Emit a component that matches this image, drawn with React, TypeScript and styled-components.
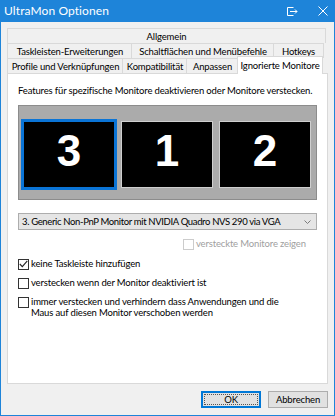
import styled, { createGlobalStyle } from 'styled-components';

const UI_FONT = `'Lato', 'Noto Sans', 'Liberation Sans', sans-serif`;
const ACCENT = '#1e84d9';

const GlobalStyle = createGlobalStyle`
  * { box-sizing: border-box; }
  html, body { margin: 0; padding: 0; background: #ffffff; }
  body { font-family: ${UI_FONT}; font-size: 9.5px; letter-spacing: -0.15px; color: #000; }
`;

const Window = styled.div`
  width: 335px;
  height: 416px;
  display: flex;
  flex-direction: column;
  background: #f0f0f0;
  border: 1px solid ${ACCENT};
  border-top: 0;
`;

const TitleBar = styled.div`
  height: 22px;
  flex: none;
  display: flex;
  align-items: center;
  justify-content: space-between;
  background: ${ACCENT};
  color: #fff;
  padding: 0 6px 0 3px;
`;

const Title = styled.span`
  font-size: 12px;
  letter-spacing: 0.1px;
  line-height: 14px;
`;

const Caption = styled.div`
  display: flex;
  align-items: center;
  gap: 20px;
`;

const Body = styled.div`
  flex: 1;
  display: flex;
  flex-direction: column;
  padding: 6px 6px 7px;
`;

const TabStrip = styled.div`
  display: flex;
  flex-direction: column;
  margin-right: 2px;
`;

const TabRow = styled.div`
  display: flex;
  height: 15px;
`;

const Tab = styled.div<{ $w: number; $active?: boolean }>`
  width: ${p => p.$w}px;
  flex: none;
  display: flex;
  align-items: center;
  justify-content: center;
  padding-top: 1px;
  line-height: 12px;
  white-space: nowrap;
  border: 1px solid #d9d9d9;
  border-bottom: 0;
  background: #f0f0f0;
  & + & {
    margin-left: -1px;
  }
  ${p =>
    p.$active &&
    `
    position: relative;
    z-index: 1;
    height: 18px;
    padding-top: 0;
    margin: -2px -2px -1px -2px;
    background: #ffffff;
    & + & { margin-left: -2px; }
    `}
`;

const Panel = styled.div`
  flex: 1;
  background: #ffffff;
  border: 1px solid #d9d9d9;
  padding: 10px 10px 0;
  display: flex;
  flex-direction: column;
`;

const Intro = styled.p`
  margin: 0;
  line-height: 13px;
  white-space: nowrap;
`;

const Arrangement = styled.div`
  margin-top: 8px;
  height: 95px;
  background: #ababab;
  border: 1px solid #8c8c8c;
  display: flex;
  align-items: flex-start;
  gap: 6px;
  padding: 15px 0 0 4px;
`;

const Monitor = styled.div<{ $selected?: boolean }>`
  width: 92px;
  height: 67px;
  background: #000;
  border: 1px solid ${p => (p.$selected ? '#0a74d6' : '#cfcfcf')};
  outline: ${p => (p.$selected ? '2px solid #0a74d6' : 'none')};
  display: flex;
  align-items: center;
  justify-content: center;
  padding-bottom: 8px;
  color: #fff;
  font-family: 'Liberation Sans', Arial, sans-serif;
  font-weight: bold;
  font-size: 44px;
  letter-spacing: 0;
  line-height: 1;
`;

const Select = styled.div`
  margin-top: 13px;
  height: 17px;
  background: #e5e5e5;
  border: 1px solid #adadad;
  display: flex;
  align-items: center;
  justify-content: space-between;
  padding: 0 5px 0 3px;
  line-height: 12px;
  letter-spacing: -0.35px;
  white-space: nowrap;
`;

const CheckRow = styled.label<{ $disabled?: boolean; $indent?: number; $gap?: number }>`
  display: flex;
  align-items: flex-start;
  gap: 2px;
  margin-top: ${p => p.$gap ?? 7}px;
  padding-left: ${p => p.$indent ?? 0}px;
  line-height: 12px;
  color: ${p => (p.$disabled ? '#a0a0a0' : '#000')};
`;

const Box = styled.span<{ $disabled?: boolean }>`
  width: 11px;
  height: 11px;
  flex: none;
  margin-top: 0.5px;
  border: 1px solid ${p => (p.$disabled ? '#cccccc' : '#333333')};
  background: #fff;
  display: flex;
  align-items: center;
  justify-content: center;
`;

const LongLabel = styled.span`
  line-height: 11px;
`;

const Footer = styled.div`
  margin-top: 7px;
  display: flex;
  justify-content: flex-end;
  gap: 7px;
`;

const Button = styled.button<{ $default?: boolean }>`
  width: 60px;
  height: 17px;
  padding: 0;
  font-family: ${UI_FONT};
  font-size: 9.5px;
  letter-spacing: -0.15px;
  color: #000;
  background: #e1e1e1;
  border: 1px solid ${p => (p.$default ? '#0078d7' : '#adadad')};
  box-shadow: ${p => (p.$default ? 'inset 0 0 0 1px #0078d7' : 'none')};
  display: flex;
  align-items: center;
  justify-content: center;
  position: relative;
`;

const FocusRing = styled.span`
  position: absolute;
  inset: 2px;
  border: 1px dotted #555;
`;

const MoveIcon = () => (
  <svg width="11" height="9" viewBox="0 0 11 9" fill="none" stroke="#fff" strokeWidth="1">
    <path d="M6.5 0.5H0.5V8.5H6.5" />
    <path d="M3 4.5H10M8 2.5L10 4.5L8 6.5" />
  </svg>
);

const CloseIcon = () => (
  <svg width="10" height="10" viewBox="0 0 10 10" stroke="#fff" strokeWidth="1">
    <path d="M0.5 0.5L9.5 9.5M9.5 0.5L0.5 9.5" />
  </svg>
);

const Chevron = () => (
  <svg width="7" height="4" viewBox="0 0 7 4" fill="none" stroke="#7a7a7a" strokeWidth="1">
    <path d="M0.5 0.5L3.5 3.5L6.5 0.5" />
  </svg>
);

const Check = () => (
  <svg width="9" height="8" viewBox="0 0 9 8" fill="none" stroke="#222" strokeWidth="1.1">
    <path d="M0.8 4L3.3 6.6L8.3 0.8" />
  </svg>
);

const tabRows = [
  [{ label: 'Allgemein', w: 319 }],
  [
    { label: 'Taskleisten-Erweiterungen', w: 126 },
    { label: 'Schaltflächen und Menübefehle', w: 144 },
    { label: 'Hotkeys', w: 51 },
  ],
  [
    { label: 'Profile und Verknüpfungen', w: 117 },
    { label: 'Kompatibilität', w: 66 },
    { label: 'Anpassen', w: 53 },
    { label: 'Ignorierte Monitore', w: 86, active: true },
  ],
];

const App = () => {
  return (
    <>
      <GlobalStyle />
      <Window>
        <TitleBar>
          <Title>UltraMon Optionen</Title>
          <Caption>
            <MoveIcon />
            <CloseIcon />
          </Caption>
        </TitleBar>
        <Body>
          <TabStrip>
            {tabRows.map((row, i) => (
              <TabRow key={i}>
                {row.map(t => (
                  <Tab key={t.label} $w={t.w} $active={'active' in t && t.active}>
                    {t.label}
                  </Tab>
                ))}
              </TabRow>
            ))}
          </TabStrip>
          <Panel>
            <Intro>Features für spezifische Monitore deaktivieren oder Monitore verstecken.</Intro>
            <Arrangement>
              <Monitor $selected>3</Monitor>
              <Monitor>1</Monitor>
              <Monitor>2</Monitor>
            </Arrangement>
            <Select>
              <span>3. Generic Non-PnP Monitor mit NVIDIA Quadro NVS 290 via VGA</span>
              <Chevron />
            </Select>
            <CheckRow $disabled $indent={165} $gap={8}>
              <Box $disabled />
              <span>versteckte Monitore zeigen</span>
            </CheckRow>
            <CheckRow $gap={8}>
              <Box>
                <Check />
              </Box>
              <span>keine Taskleiste hinzufügen</span>
            </CheckRow>
            <CheckRow>
              <Box />
              <span>verstecken wenn der Monitor deaktiviert ist</span>
            </CheckRow>
            <CheckRow>
              <Box />
              <LongLabel>
                immer verstecken und verhindern dass Anwendungen und die
                <br />
                Maus auf diesen Monitor verschoben werden
              </LongLabel>
            </CheckRow>
          </Panel>
          <Footer>
            <Button $default>
              <FocusRing />
              OK
            </Button>
            <Button>Abbrechen</Button>
          </Footer>
        </Body>
      </Window>
    </>
  );
};

export default App;
